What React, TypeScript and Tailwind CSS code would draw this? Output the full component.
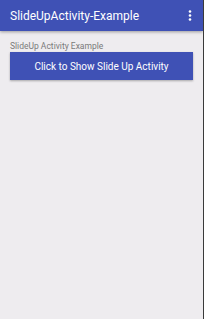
export default function App() {
  return (
    <div
      className="w-[204px] h-[319px] bg-[#eeecef] flex flex-col border-r border-r-[#3a3a3a] overflow-hidden"
      style={{ fontFamily: "Roboto, 'Liberation Sans', sans-serif" }}
    >
      <div className="h-[31px] bg-[#3f51b5] flex items-center justify-between pl-[10px] pr-[11px] shadow-[0_1px_3px_rgba(0,0,0,0.35)] shrink-0 relative z-10">
        <span className="text-white text-[12px] leading-none">SlideUpActivity-Example</span>
        <svg width="4" height="11" viewBox="0 0 4 11">
          <circle cx="2" cy="1.5" r="1.3" fill="white" />
          <circle cx="2" cy="5.5" r="1.3" fill="white" />
          <circle cx="2" cy="9.5" r="1.3" fill="white" />
        </svg>
      </div>
      <div className="flex flex-col px-[10px] pt-[10px]">
        <span className="text-[8.5px] leading-[10px] text-[#7a7a7a]">SlideUp Activity Example</span>
        <div className="mt-[1px] h-[28px] bg-[#3f51b5] flex items-center justify-center shadow-[0_1px_2px_rgba(0,0,0,0.3)]">
          <span className="text-white text-[10px]">Click to Show Slide Up Activity</span>
        </div>
      </div>
    </div>
  );
}
